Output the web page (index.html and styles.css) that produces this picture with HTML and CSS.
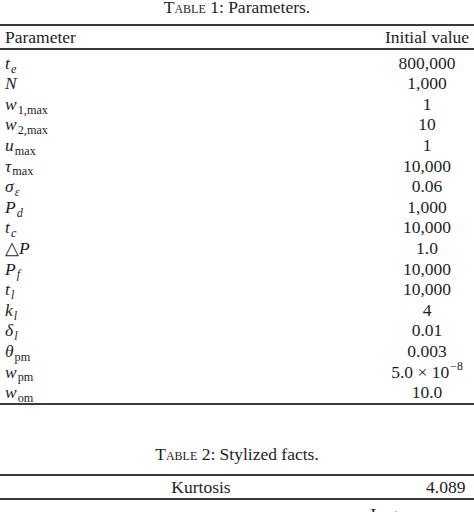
FILE: index.html
```html
<!DOCTYPE html>
<html lang="en">
<head>
<meta charset="utf-8">
<title>Parameters</title>
<link rel="stylesheet" href="styles.css">
</head>
<body>
<div class="caption"><span class="sc">Table</span> 1: Parameters.</div>
<table class="params">
  <thead>
    <tr><th class="name">Parameter</th><th class="val">Initial value</th></tr>
  </thead>
  <tbody>
    <tr class="first"><td class="name"><i>t</i><sub><i>e</i></sub></td><td class="val">800,000</td></tr>
    <tr><td class="name"><i>N</i></td><td class="val">1,000</td></tr>
    <tr><td class="name"><i>w</i><sub>1,max</sub></td><td class="val">1</td></tr>
    <tr><td class="name"><i>w</i><sub>2,max</sub></td><td class="val">10</td></tr>
    <tr><td class="name"><i>u</i><sub>max</sub></td><td class="val">1</td></tr>
    <tr><td class="name"><i>τ</i><sub>max</sub></td><td class="val">10,000</td></tr>
    <tr><td class="name"><i>σ</i><sub><i>ε</i></sub></td><td class="val">0.06</td></tr>
    <tr><td class="name"><i>P</i><sub><i>d</i></sub></td><td class="val">1,000</td></tr>
    <tr><td class="name"><i>t</i><sub><i>c</i></sub></td><td class="val">10,000</td></tr>
    <tr><td class="name">△<i>P</i></td><td class="val">1.0</td></tr>
    <tr><td class="name"><i>P</i><sub><i>f</i></sub></td><td class="val">10,000</td></tr>
    <tr><td class="name"><i>t</i><sub><i>l</i></sub></td><td class="val">10,000</td></tr>
    <tr><td class="name"><i>k</i><sub><i>l</i></sub></td><td class="val">4</td></tr>
    <tr><td class="name"><i>δ</i><sub><i>l</i></sub></td><td class="val">0.01</td></tr>
    <tr><td class="name"><i>θ</i><sub>pm</sub></td><td class="val">0.003</td></tr>
    <tr><td class="name"><i>w</i><sub>pm</sub></td><td class="val">5.0 × 10<sup>−8</sup></td></tr>
    <tr class="last"><td class="name"><i>w</i><sub>om</sub></td><td class="val">10.0</td></tr>
  </tbody>
</table>

<div class="caption caption2"><span class="sc">Table</span> 2: Stylized facts.</div>
<table class="facts">
  <colgroup>
    <col class="c1">
    <col class="c2">
    <col class="c3">
  </colgroup>
  <tbody>
    <tr class="krow"><td class="kname" colspan="2">Kurtosis</td><td class="kval">4.089</td></tr>
    <tr class="lrow"><td></td><td class="lag">Lag</td><td></td></tr>
  </tbody>
</table>
</body>
</html>
```

FILE: styles.css
```css
html, body {
  margin: 0;
  padding: 0;
  background: #ffffff;
}

body {
  font-family: "Liberation Serif", "Times New Roman", serif;
  font-size: 17.5px;
  color: #1e1e1e;
  overflow: hidden;
}

.caption {
  text-align: center;
  line-height: 14px;
  height: 14px;
  margin-bottom: 10px;
}

.sc {
  font-variant: small-caps;
}

.caption2 {
  margin-top: 42px;
  margin-bottom: 13px;
}

table {
  width: 100%;
  border-spacing: 0;
  border-collapse: separate;
  table-layout: fixed;
}

.params {
  border-top: 2px solid #3a3a3a;
  border-bottom: 2px solid #3a3a3a;
}

.params th,
.params td {
  font-weight: normal;
  padding: 0 5px;
  line-height: 20.6px;
  height: 20.6px;
  white-space: nowrap;
}

.params th {
  padding-top: 1px;
  border-bottom: 2px solid #3a3a3a;
}

.params .name {
  text-align: left;
}

.params .val {
  width: 84px;
  text-align: center;
}

.params tr.first td {
  padding-top: 3px;
}

.params tr.last td {
  padding-bottom: 0.5px;
}

sub {
  font-size: 0.7em;
  line-height: 0;
  vertical-align: -0.32em;
  margin-left: 1px;
}

sup {
  font-size: 0.68em;
  line-height: 0;
  vertical-align: 0.6em;
  margin-left: 1px;
}

i {
  font-style: italic;
}

.facts {
  border-top: 2px solid #3a3a3a;
}

.facts col.c1 {
  width: 342px;
}

.facts col.c2 {
  width: 84px;
}

.facts col.c3 {
  width: 48px;
}

.facts td {
  padding: 0;
  line-height: 20.6px;
  white-space: nowrap;
}

.facts .krow td {
  padding-top: 1px;
  border-bottom: 2px solid #3a3a3a;
}

.facts .kname {
  text-align: center;
  padding-right: 24px;
}

.facts .kval {
  text-align: right;
  padding-right: 11px;
}

.facts .lag {
  text-align: center;
  padding-top: 4px;
}
```
